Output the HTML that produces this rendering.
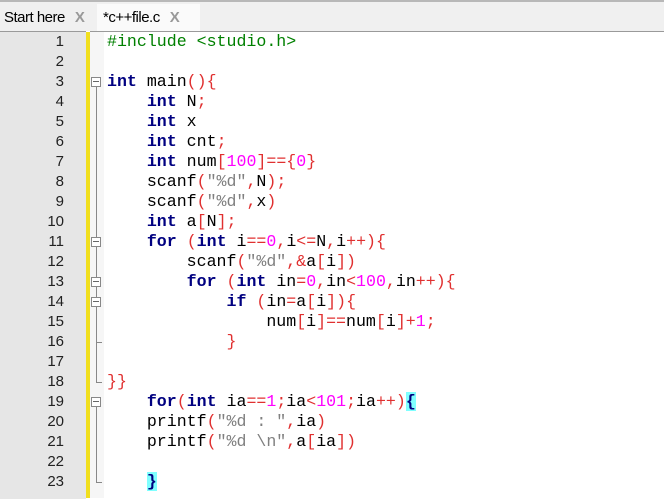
<!DOCTYPE html><html><head><style>
body{margin:0;width:664px;height:498px;overflow:hidden;background:#fff;position:relative;font-family:"Liberation Mono",monospace}
.tb{position:absolute;left:0;top:0;width:664px;height:31px;background:#f0f0f0;border-top:2px solid #b8b8b8;box-sizing:border-box}
.tab{position:absolute;top:4px;height:27px;font:15px "Liberation Sans",sans-serif;line-height:27px;color:#000;letter-spacing:-0.5px}
.x{color:#999;font-weight:bold;margin-left:10px}
.gut{position:absolute;left:0;top:31px;width:86px;height:467px;background:#e6e6e6;border-top:1px solid #9a9a9a}
.yl{position:absolute;left:86px;top:32px;width:4px;height:466px;background:#f1df1e}
.fm{position:absolute;left:90px;top:32px;width:14px;height:466px;background:#f6f6f6}
.sep{position:absolute;left:90px;top:31px;width:574px;height:1px;background:#9a9a9a}
.n{position:absolute;right:600px;font:15px "Liberation Sans",sans-serif;height:20px;line-height:20px;color:#222}
.l{position:absolute;left:107px;height:20px;line-height:20px;font-size:16.6px;white-space:pre;color:#000}
.k{color:#000080;font-weight:bold}.o{color:#e03030}.m{color:#ff00ff}.s{color:#808080}.p{color:#008000}
.hl{background:#80ffff}
.box{position:absolute;left:91px;width:10px;height:10px;border:1px solid #888;background:#fff;box-sizing:border-box}
.box:after{content:"";position:absolute;left:1px;top:3px;width:6px;height:1px;background:#666}
.vl{position:absolute;left:96px;width:1px;background:#888}
.tk{position:absolute;left:96px;width:6px;height:1px;background:#888}
</style></head><body>
<div class="tb"></div>
<div class="tab" style="left:4px">Start here<span class="x">X</span></div>
<div class="tab" style="left:97px;width:103px;background:#fafafa;padding-left:6px;box-sizing:border-box">*c++file.c<span class="x">X</span></div>
<div class="gut"></div><div class="yl"></div><div class="fm"></div><div class="sep"></div>
<div class="n" style="top:32px">1</div><div class="n" style="top:52px">2</div><div class="n" style="top:72px">3</div><div class="n" style="top:92px">4</div><div class="n" style="top:112px">5</div><div class="n" style="top:132px">6</div><div class="n" style="top:152px">7</div><div class="n" style="top:172px">8</div><div class="n" style="top:192px">9</div><div class="n" style="top:212px">10</div><div class="n" style="top:232px">11</div><div class="n" style="top:252px">12</div><div class="n" style="top:272px">13</div><div class="n" style="top:292px">14</div><div class="n" style="top:312px">15</div><div class="n" style="top:332px">16</div><div class="n" style="top:352px">17</div><div class="n" style="top:372px">18</div><div class="n" style="top:392px">19</div><div class="n" style="top:412px">20</div><div class="n" style="top:432px">21</div><div class="n" style="top:452px">22</div><div class="n" style="top:472px">23</div>
<div class="vl" style="top:87px;height:295px"></div>
<div class="tk" style="top:342px"></div><div class="tk" style="top:382px"></div>
<div class="vl" style="top:407px;height:75px"></div><div class="tk" style="top:482px"></div>
<div class="box" style="top:77px"></div><div class="box" style="top:237px"></div><div class="box" style="top:277px"></div><div class="box" style="top:297px"></div><div class="box" style="top:397px"></div>
<div class="l" style="top:32px"><span class="p">#include &lt;studio.h&gt;</span></div>
<div class="l" style="top:72px"><span class="k">int</span> main<span class="o">(){</span></div>
<div class="l" style="top:92px">    <span class="k">int</span> N<span class="o">;</span></div>
<div class="l" style="top:112px">    <span class="k">int</span> x</div>
<div class="l" style="top:132px">    <span class="k">int</span> cnt<span class="o">;</span></div>
<div class="l" style="top:152px">    <span class="k">int</span> num<span class="o">[</span><span class="m">100</span><span class="o">]=={</span><span class="m">0</span><span class="o">}</span></div>
<div class="l" style="top:172px">    scanf<span class="o">(</span><span class="s">"%d"</span><span class="o">,</span>N<span class="o">);</span></div>
<div class="l" style="top:192px">    scanf<span class="o">(</span><span class="s">"%d"</span><span class="o">,</span>x<span class="o">)</span></div>
<div class="l" style="top:212px">    <span class="k">int</span> a<span class="o">[</span>N<span class="o">];</span></div>
<div class="l" style="top:232px">    <span class="k">for</span> <span class="o">(</span><span class="k">int</span> i<span class="o">==</span><span class="m">0</span><span class="o">,</span>i<span class="o">&lt;=</span>N<span class="o">,</span>i<span class="o">++){</span></div>
<div class="l" style="top:252px">        scanf<span class="o">(</span><span class="s">"%d"</span><span class="o">,&amp;</span>a<span class="o">[</span>i<span class="o">])</span></div>
<div class="l" style="top:272px">        <span class="k">for</span> <span class="o">(</span><span class="k">int</span> in<span class="o">=</span><span class="m">0</span><span class="o">,</span>in<span class="o">&lt;</span><span class="m">100</span><span class="o">,</span>in<span class="o">++){</span></div>
<div class="l" style="top:292px">            <span class="k">if</span> <span class="o">(</span>in<span class="o">=</span>a<span class="o">[</span>i<span class="o">]){</span></div>
<div class="l" style="top:312px">                num<span class="o">[</span>i<span class="o">]==</span>num<span class="o">[</span>i<span class="o">]+</span><span class="m">1</span><span class="o">;</span></div>
<div class="l" style="top:332px">            <span class="o">}</span></div>
<div class="l" style="top:372px"><span class="o">}}</span></div>
<div class="l" style="top:392px">    <span class="k">for</span><span class="o">(</span><span class="k">int</span> ia<span class="o">==</span><span class="m">1</span><span class="o">;</span>ia<span class="o">&lt;</span><span class="m">101</span><span class="o">;</span>ia<span class="o">++)</span><span class="k hl">{</span></div>
<div class="l" style="top:412px">    printf<span class="o">(</span><span class="s">"%d : "</span><span class="o">,</span>ia<span class="o">)</span></div>
<div class="l" style="top:432px">    printf<span class="o">(</span><span class="s">"%d \n"</span><span class="o">,</span>a<span class="o">[</span>ia<span class="o">])</span></div>
<div class="l" style="top:472px">    <span class="k hl">}</span></div>
</body></html>
